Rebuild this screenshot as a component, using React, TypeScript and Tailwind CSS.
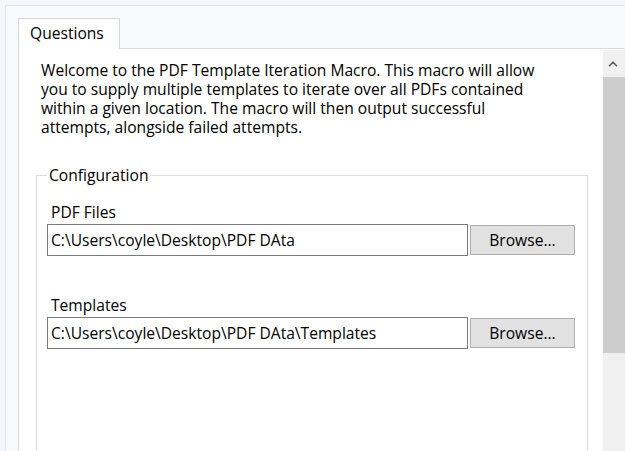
import { ChevronUp } from 'lucide-react';

const font = { fontFamily: '"Open Sans", "Noto Sans", sans-serif' };

function PathField({ label, value }: { label: string; value: string }) {
  return (
    <div>
      <p className="ml-1 h-[22px] leading-[20px] text-black">{label}</p>
      <div className="flex items-start gap-[2px]">
        <div className="w-[421px] h-[32px] border border-[#7a7a7a] bg-white px-[3px] leading-[30px] text-black">
          {value}
        </div>
        <button className="mt-px w-[105px] h-[30px] border border-[#adadad] bg-[#e1e1e1] text-black leading-[28px]">
          Browse...
        </button>
      </div>
    </div>
  );
}

export default function App() {
  return (
    <div className="w-[625px] h-[451px] overflow-hidden bg-[#f3f6fb] pt-[5px] pl-[5px] text-[15.6px]" style={font}>
      <div className="h-full border-t border-l border-[#dde4ee] bg-[#f9fafc] pt-[12px] pl-[12px]">
        {/* Tab header */}
        <div className="relative z-10 -mb-px w-[102px] h-[31px] border border-b-0 border-[#d9d9d9] bg-white pl-[11px] leading-[29px] text-black">
          Questions
        </div>

        {/* Tab page */}
        <div className="flex h-full border-t border-l border-[#d9d9d9] bg-white pt-px">
          <div className="w-[584px] shrink-0 pl-[17px] pt-[11px]">
            <p className="pl-[5px] leading-[19px] text-black">
              Welcome to the PDF Template Iteration Macro. This macro will allow<br />
              you to supply multiple templates to iterate over all PDFs contained<br />
              within a given location. The macro will then output successful<br />
              attempts, alongside failed attempts.
            </p>

            <fieldset className="mt-[28px] h-[400px] w-[552px] border border-[#dcdcdc] pl-[10px]">
              <legend className="px-[2px] leading-[20px] text-black">Configuration</legend>
              <div className="flex flex-col gap-[39px] pt-[17px]">
                <PathField label="PDF Files" value="C:\Users\coyle\Desktop\PDF DAta" />
                <PathField label="Templates" value="C:\Users\coyle\Desktop\PDF DAta\Templates" />
              </div>
            </fieldset>
          </div>

          {/* Scrollbar */}
          <div className="w-[22px] shrink-0 bg-[#f0f0f0] flex flex-col">
            <div className="h-[27px] flex items-center justify-center pr-[2px]">
              <ChevronUp className="w-[14px] h-[14px] text-[#606060]" strokeWidth={3} />
            </div>
            <div className="h-[276px] bg-[#cdcdcd]" />
          </div>
        </div>
      </div>
    </div>
  );
}
